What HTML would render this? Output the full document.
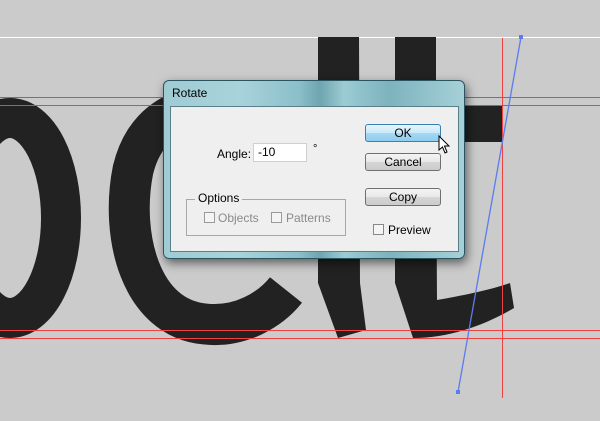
<!DOCTYPE html>
<html><head><style>
body{margin:0;width:600px;height:421px;overflow:hidden;background:#cbcbcb;font-family:"Liberation Sans",sans-serif;}
.dlg{position:absolute;left:163px;top:80px;width:302px;height:179px;border-radius:6px;border:1px solid #2a5560;
background:linear-gradient(90deg,#9fcbd4 0%,#a9d3db 25%,#8bbfc9 45%,#6ea5b0 52%,#9ccbd3 60%,#7db3bd 75%,#a6d0d8 100%);
box-shadow:2px 4px 10px rgba(0,0,0,.55);box-sizing:border-box;}
.title{position:absolute;left:8px;top:5px;font-size:12px;color:#000;}
.panel{position:absolute;left:6px;top:25px;width:289px;height:146px;background:#efefef;border:1px solid #5a7f88;box-sizing:border-box;}
.btn{position:absolute;width:76px;height:18px;border:1px solid #707070;border-radius:3px;box-sizing:border-box;
background:linear-gradient(#f4f4f4 0%,#e8e8e8 50%,#d6d6d6 51%,#cbcbcb 100%);font-size:12px;text-align:center;line-height:16px;color:#000;}
.ok{border-color:#3c7fb1;background:linear-gradient(#e6f5fc 0%,#c9e8f8 50%,#a6d8f3 51%,#8ecdf0 100%);}
.cb{position:absolute;width:11px;height:11px;border:1px solid #9a9a9a;background:#f4f4f4;box-sizing:border-box;}
.lbl{position:absolute;font-size:12px;}
</style></head><body>
<svg width="600" height="421" style="position:absolute;left:0;top:0">
<rect x="0" y="37" width="600" height="1" fill="#fff"/>
<ellipse cx="10" cy="218" rx="51" ry="100" fill="none" stroke="#222" stroke-width="40"/>
<path d="M250 112 C 215 100,150 100,133 170 C 120 235,140 318,205 324 C 240 328,270 310,286 290" fill="none" stroke="#222" stroke-width="41"/>
<polygon points="318,37 359,37 360,283 366,330 338,338 318,283" fill="#222"/>
<path d="M395,37 L436,37 L436,105 L502,105 L502,142 L436,142 L437,300 C 460,296 490,290 510,283 L514,308 C 485,325 450,338 413,338 L395,283 Z" fill="#222"/>
<rect x="0" y="97" width="600" height="1" fill="#f04040"/>
<rect x="0" y="105" width="600" height="1" fill="#f04040"/>
<rect x="0" y="330" width="600" height="1" fill="#f04040"/>
<rect x="0" y="338" width="600" height="1" fill="#f04040"/>
<rect x="502" y="38" width="1" height="360" fill="#f04040"/>
<line x1="521" y1="37" x2="458" y2="392" stroke="#5a7cf0" stroke-width="1.3"/>
<rect x="519" y="35" width="4" height="4" fill="#5a7cf0"/>
<rect x="456" y="390" width="4" height="4" fill="#5a7cf0"/>
</svg>
<div class="dlg">
<div class="title">Rotate</div>
<div class="panel">
<div class="lbl" style="left:46px;top:40px">Angle:</div>
<div style="position:absolute;left:82px;top:36px;width:54px;height:19px;background:#fff;border:1px solid #d0d0d0;box-sizing:border-box;font-size:12px;line-height:17px;padding-left:4px">-10</div>
<div class="lbl" style="left:142px;top:36px;font-size:11px">°</div>
<div style="position:absolute;left:15px;top:92px;width:160px;height:37px;border:1px solid #a8a8a8;box-sizing:border-box"></div>
<div class="lbl" style="left:24px;top:84px;background:#efefef;padding:0 3px">Options</div>
<div class="cb" style="left:33px;top:105px"></div><div class="lbl" style="left:47px;top:104px;color:#8a8a8a">Objects</div>
<div class="cb" style="left:100px;top:105px"></div><div class="lbl" style="left:115px;top:104px;color:#8a8a8a">Patterns</div>
<div class="btn ok" style="left:194px;top:17px">OK</div>
<div class="btn" style="left:194px;top:46px">Cancel</div>
<div class="btn" style="left:194px;top:81px">Copy</div>
<div class="cb" style="left:202px;top:117px;border-color:#888"></div><div class="lbl" style="left:217px;top:116px">Preview</div>
</div>
</div>
<svg width="14" height="20" style="position:absolute;left:438px;top:135px"><path d="M1 1 L1 15 L4.5 12 L7 18 L9 17 L6.5 11 L11 11 Z" fill="#fff" stroke="#000" stroke-width="1"/></svg>
</body></html>
